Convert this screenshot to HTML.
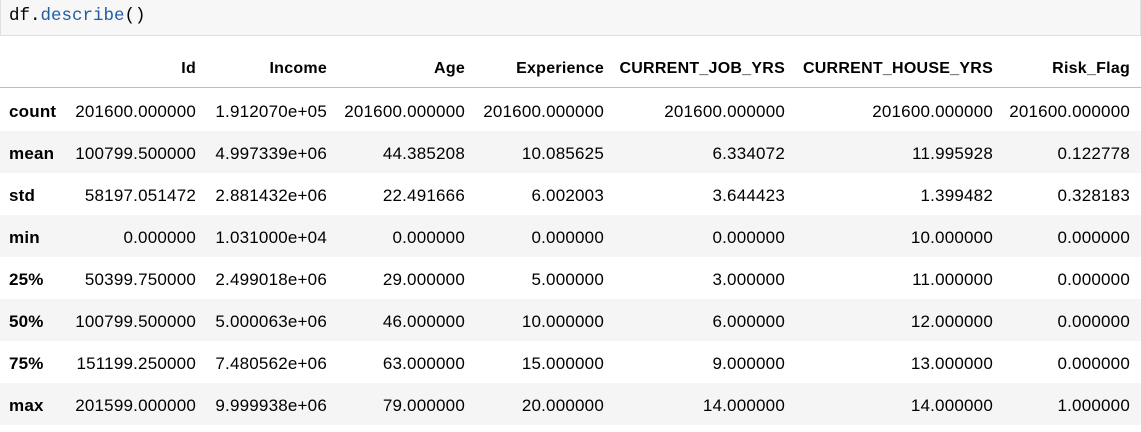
<!DOCTYPE html>
<html><head><style>
body{margin:0;width:1141px;height:432px;background:#fff;font-family:"Liberation Sans",sans-serif;position:relative;overflow:hidden;color:#000}
.code{position:absolute;left:0;top:0;width:1141px;height:36px;background:#f7f7f7;border:1px solid #e0e0e0;border-top:none;box-sizing:border-box;font-family:"Liberation Mono",monospace;font-size:17.5px;line-height:32px;padding-left:8px;color:#000}
.code .m{color:#1f5da8}
.row{position:absolute;left:0;width:1141px;height:42px}
.row.s{background:#f5f5f5}
.c{position:absolute;top:2px;line-height:42px;font-size:17px;letter-spacing:0.2px;text-align:right;white-space:nowrap}
.h .c{font-weight:bold;font-size:16px;letter-spacing:0.25px}
.idx{left:9px;font-weight:bold;text-align:left}
.line{position:absolute;left:0;width:1141px;top:87px;height:1px;background:#bdbdbd}
</style></head><body>
<div class="code">df.<span class="m">describe</span>()</div>
<div class="row h" style="top:46px">
<div class="c" style="right:945px">Id</div>
<div class="c" style="right:814px">Income</div>
<div class="c" style="right:676px">Age</div>
<div class="c" style="right:537px">Experience</div>
<div class="c" style="right:356px">CURRENT_JOB_YRS</div>
<div class="c" style="right:148px">CURRENT_HOUSE_YRS</div>
<div class="c" style="right:11px">Risk_Flag</div>
</div>
<div class="line"></div>
<div class="row" style="top:89px"><div class="c idx">count</div><div class="c" style="right:945px">201600.000000</div><div class="c" style="right:814px">1.912070e+05</div><div class="c" style="right:676px">201600.000000</div><div class="c" style="right:537px">201600.000000</div><div class="c" style="right:356px">201600.000000</div><div class="c" style="right:148px">201600.000000</div><div class="c" style="right:11px">201600.000000</div></div>
<div class="row s" style="top:131px"><div class="c idx">mean</div><div class="c" style="right:945px">100799.500000</div><div class="c" style="right:814px">4.997339e+06</div><div class="c" style="right:676px">44.385208</div><div class="c" style="right:537px">10.085625</div><div class="c" style="right:356px">6.334072</div><div class="c" style="right:148px">11.995928</div><div class="c" style="right:11px">0.122778</div></div>
<div class="row" style="top:173px"><div class="c idx">std</div><div class="c" style="right:945px">58197.051472</div><div class="c" style="right:814px">2.881432e+06</div><div class="c" style="right:676px">22.491666</div><div class="c" style="right:537px">6.002003</div><div class="c" style="right:356px">3.644423</div><div class="c" style="right:148px">1.399482</div><div class="c" style="right:11px">0.328183</div></div>
<div class="row s" style="top:215px"><div class="c idx">min</div><div class="c" style="right:945px">0.000000</div><div class="c" style="right:814px">1.031000e+04</div><div class="c" style="right:676px">0.000000</div><div class="c" style="right:537px">0.000000</div><div class="c" style="right:356px">0.000000</div><div class="c" style="right:148px">10.000000</div><div class="c" style="right:11px">0.000000</div></div>
<div class="row" style="top:257px"><div class="c idx">25%</div><div class="c" style="right:945px">50399.750000</div><div class="c" style="right:814px">2.499018e+06</div><div class="c" style="right:676px">29.000000</div><div class="c" style="right:537px">5.000000</div><div class="c" style="right:356px">3.000000</div><div class="c" style="right:148px">11.000000</div><div class="c" style="right:11px">0.000000</div></div>
<div class="row s" style="top:299px"><div class="c idx">50%</div><div class="c" style="right:945px">100799.500000</div><div class="c" style="right:814px">5.000063e+06</div><div class="c" style="right:676px">46.000000</div><div class="c" style="right:537px">10.000000</div><div class="c" style="right:356px">6.000000</div><div class="c" style="right:148px">12.000000</div><div class="c" style="right:11px">0.000000</div></div>
<div class="row" style="top:341px"><div class="c idx">75%</div><div class="c" style="right:945px">151199.250000</div><div class="c" style="right:814px">7.480562e+06</div><div class="c" style="right:676px">63.000000</div><div class="c" style="right:537px">15.000000</div><div class="c" style="right:356px">9.000000</div><div class="c" style="right:148px">13.000000</div><div class="c" style="right:11px">0.000000</div></div>
<div class="row s" style="top:383px"><div class="c idx">max</div><div class="c" style="right:945px">201599.000000</div><div class="c" style="right:814px">9.999938e+06</div><div class="c" style="right:676px">79.000000</div><div class="c" style="right:537px">20.000000</div><div class="c" style="right:356px">14.000000</div><div class="c" style="right:148px">14.000000</div><div class="c" style="right:11px">1.000000</div></div>
</body></html>
